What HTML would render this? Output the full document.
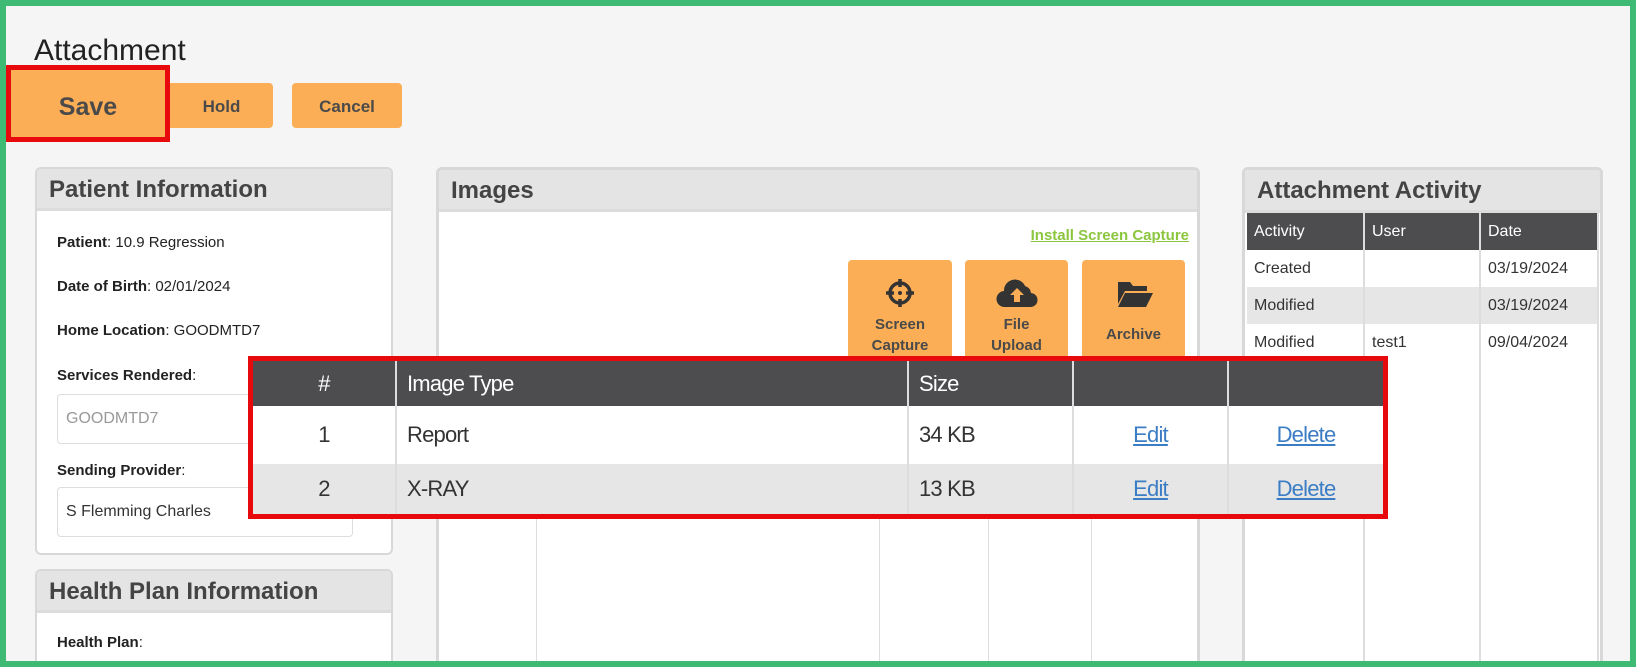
<!DOCTYPE html>
<html><head><meta charset="utf-8"><style>
*{box-sizing:border-box;margin:0;padding:0}
html,body{width:1636px;height:667px;overflow:hidden}
body{background:#3fba75;font-family:"Liberation Sans",sans-serif;color:#333;position:relative}
#pg{position:absolute;left:6px;top:6px;width:1624px;height:655px;background:#f5f5f5;overflow:hidden}
.a{position:absolute}
.btn{position:absolute;background:#fbae55;border-radius:4px;color:#4a4a4a;font-weight:bold;text-align:center}
.panel{position:absolute;border:2px solid #d8d8d8;border-radius:6px;background:#fff;overflow:hidden}
.ph{background:#e4e4e4;height:42px;border-bottom:3px solid #dcdcdc;font-weight:bold;font-size:24px;color:#444;padding:7px 0 0 12px}
.lbl{position:absolute;font-size:15px;color:#222}
.lbl b{font-weight:bold}
.inp{position:absolute;border:1px solid #ddd;border-radius:4px;background:#fff;font-size:16px;padding:0 0 0 8px}
table{border-collapse:collapse}
.at td,.at th{border-right:2px solid #ddd;font-size:16px;text-align:left;padding-left:7px;font-weight:normal}
.at th{background:#4d4d4f;color:#fff;height:37px}
.at td{height:37px;color:#333}
.rt td,.rt th{border-right:2px solid #ddd;font-size:22px;font-weight:normal;letter-spacing:-0.8px}
.rt th{background:#4d4d4f;color:#fff;height:45px;text-align:left;padding-left:10px}
.rt td{color:#333;padding-left:10px}
.rt a{color:#3b7dc4;text-decoration:underline}
</style></head><body><div id="pg">
<div class="a" style="left:28px;top:28px;font-size:30px;color:#222">Attachment</div>
<div class="a" style="left:0;top:59px;width:164px;height:77px;background:#e8090c"></div>
<div class="btn" style="left:5px;top:64px;width:154px;height:67px;font-size:25px;line-height:75px;border-radius:0">Save</div>
<div class="btn" style="left:164px;top:77px;width:103px;height:45px;line-height:48px;font-size:17px;border-radius:0 4px 4px 0">Hold</div>
<div class="btn" style="left:286px;top:77px;width:110px;height:45px;line-height:48px;font-size:17px">Cancel</div>

<div class="panel" style="left:29px;top:161px;width:358px;height:388px">
<div class="ph">Patient Information</div>
<div class="lbl" style="left:20px;top:65px"><b>Patient</b>: 10.9 Regression</div>
<div class="lbl" style="left:20px;top:109px"><b>Date of Birth</b>: 02/01/2024</div>
<div class="lbl" style="left:20px;top:153px"><b>Home Location</b>: GOODMTD7</div>
<div class="lbl" style="left:20px;top:198px"><b>Services Rendered</b>:</div>
<div class="inp" style="left:20px;top:225px;width:295px;height:50px;line-height:48px;color:#999">GOODMTD7</div>
<div class="lbl" style="left:20px;top:293px"><b>Sending Provider</b>:</div>
<div class="inp" style="left:20px;top:318px;width:296px;height:50px;line-height:48px;color:#333">S Flemming Charles</div>
</div>
<div class="panel" style="left:29px;top:563px;width:358px;height:120px">
<div class="ph">Health Plan Information</div>
<div class="lbl" style="left:20px;top:63px"><b>Health Plan</b>:</div>
</div>

<div class="panel" style="left:430px;top:161px;width:764px;height:520px;border-width:3px">
<div class="ph">Images</div>
<div class="a" style="right:8px;top:57px;font-size:15px;font-weight:bold;color:#8cc63f;text-decoration:underline">Install Screen Capture</div>
<div class="btn" style="left:409px;top:90px;width:104px;height:110px;font-size:15px;padding-top:54px;line-height:21px">Screen<br>Capture
<svg class="a" style="left:37px;top:18px" width="30" height="30" viewBox="0 0 30 30"><circle cx="15" cy="15" r="10" fill="none" stroke="#333" stroke-width="3.5"/><circle cx="15" cy="15" r="2" fill="#333"/><path d="M15 1v8M15 21v8M1 15h8M21 15h8" stroke="#333" stroke-width="3.5"/></svg></div>
<div class="btn" style="left:526px;top:90px;width:103px;height:110px;font-size:15px;padding-top:54px;line-height:21px">File<br>Upload
<svg class="a" style="left:31px;top:18px" width="42" height="30" viewBox="0 0 42 30"><path d="M9 29a8 8 0 0 1-1-16 11 11 0 0 1 21-5 8 8 0 0 1 6 7 7 7 0 0 1-1 14z" fill="#333"/><path d="M21 10l-7 7h4v7h6v-7h4z" fill="#fbae55"/></svg></div>
<div class="btn" style="left:643px;top:90px;width:103px;height:110px;font-size:15px;padding-top:64px;line-height:21px">Archive
<svg class="a" style="left:34px;top:20px" width="38" height="28" viewBox="0 0 38 28"><path d="M2 2h12l3 4h14v5H9L2 24z" fill="#333"/><path d="M9 13h28l-7 14H2z" fill="#333"/></svg></div>
<div class="a" style="left:0;top:339px;width:760px;height:200px;background:#fff"></div>
<div class="a" style="left:97px;top:339px;width:1px;height:200px;background:#ddd"></div>
<div class="a" style="left:440px;top:339px;width:1px;height:200px;background:#ddd"></div>
<div class="a" style="left:549px;top:339px;width:1px;height:200px;background:#ddd"></div>
<div class="a" style="left:652px;top:339px;width:1px;height:200px;background:#ddd"></div>
</div>

<div class="panel" style="left:1236px;top:161px;width:361px;height:520px;border-width:3px;background:#fff">
<div class="ph" style="height:43px">Attachment Activity</div>
<table class="at" style="position:absolute;left:2px;top:43px;width:352px">
<tr><th style="width:117px">Activity</th><th style="width:116px">User</th><th>Date</th></tr>
<tr><td>Created</td><td></td><td>03/19/2024</td></tr>
<tr style="background:#e6e6e6"><td>Modified</td><td></td><td>03/19/2024</td></tr>
<tr><td>Modified</td><td>test1</td><td>09/04/2024</td></tr>
<tr><td style="height:400px"></td><td></td><td></td></tr>
</table>
</div>

<div class="a" style="left:242px;top:350px;width:1140px;height:163px;border:5px solid #e8090c;background:#fff">
<table class="rt" style="width:1130px">
<tr><th style="width:143px;text-align:center;padding:0">#</th><th style="width:512px">Image Type</th><th style="width:165px">Size</th><th style="width:155px"></th><th style="border-right:0"></th></tr>
<tr style="height:58px"><td style="text-align:center;padding:0">1</td><td>Report</td><td>34 KB</td><td style="text-align:center;padding:0"><a>Edit</a></td><td style="text-align:center;padding:0;border-right:0"><a>Delete</a></td></tr>
<tr style="height:50px;background:#e6e6e6"><td style="text-align:center;padding:0">2</td><td>X-RAY</td><td>13 KB</td><td style="text-align:center;padding:0"><a>Edit</a></td><td style="text-align:center;padding:0;border-right:0"><a>Delete</a></td></tr>
</table>
</div>
</div></body></html>
